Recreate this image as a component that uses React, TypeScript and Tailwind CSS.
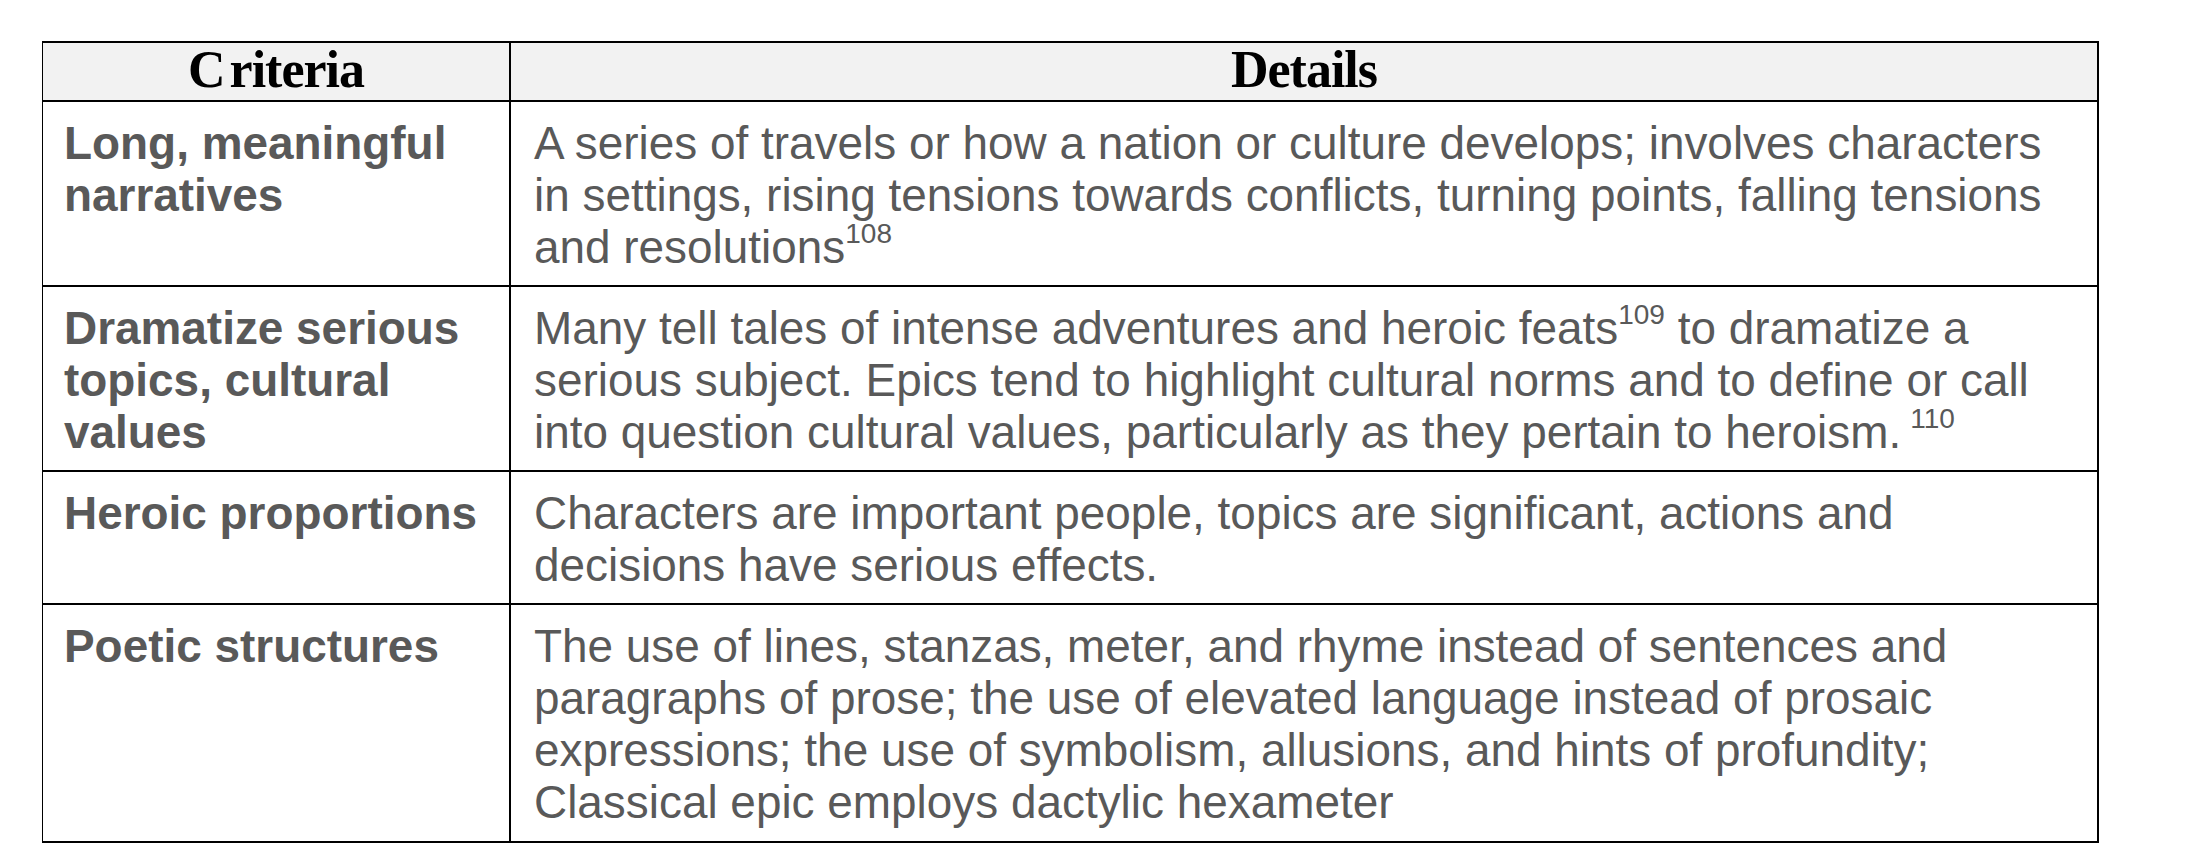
import React from "react";

const sans = { fontFamily: '"Liberation Sans", Arial, Helvetica, sans-serif' };
const serif = { fontFamily: '"Liberation Serif", "Times New Roman", serif' };

function Sup({ children, className = "" }: { children: React.ReactNode; className?: string }) {
  return <sup className={`text-[28px] relative top-[-0.72em] leading-none ${className}`}>{children}</sup>;
}

type Row = { label: string[]; lines: React.ReactNode[] };

const rows: Row[] = [
  {
    label: ["Long, meaningful", "narratives"],
    lines: [
      "A series of travels or how a nation or culture develops; involves characters",
      "in settings, rising tensions towards conflicts, turning points, falling tensions",
      <>and resolutions<Sup>108</Sup></>,
    ],
  },
  {
    label: ["Dramatize serious", "topics, cultural", "values"],
    lines: [
      <>Many tell tales of intense adventures and heroic feats<Sup>109</Sup> to dramatize a</>,
      "serious subject. Epics tend to highlight cultural norms and to define or call",
      <>into question cultural values, particularly as they pertain to heroism.<Sup className="ml-[9px]">110</Sup></>,
    ],
  },
  {
    label: ["Heroic proportions"],
    lines: [
      "Characters are important people, topics are significant, actions and",
      "decisions have serious effects.",
    ],
  },
  {
    label: ["Poetic structures"],
    lines: [
      "The use of lines, stanzas, meter, and rhyme instead of sentences and",
      "paragraphs of prose; the use of elevated language instead of prosaic",
      "expressions; the use of symbolism, allusions, and hints of profundity;",
      "Classical epic employs dactylic hexameter",
    ],
  },
];

export default function App() {
  return (
    <div className="w-[2185px] h-[852px] bg-white overflow-hidden pt-[41px] pl-[42px]" style={sans}>
      <div className="w-[2057px] border-t-2 border-r-2 border-b-2 border-l border-black">
        <div className="flex bg-[#f2f2f2] border-b-2 border-black h-[59px]">
          <div className="w-[466px] h-[57px] pt-[1px] text-center text-black font-bold text-[52px] leading-[52px] tracking-[-1px]" style={serif}>
            <span className="mr-[5px]">C</span>riteria
          </div>
          <div className="flex-1 h-[57px] pt-[1px] border-l-2 border-black text-center text-black font-bold text-[52px] leading-[52px] tracking-[-1px]" style={serif}>
            Details
          </div>
        </div>
        {rows.map((r, i) => (
          <div key={i} className={`flex ${i < rows.length - 1 ? "border-b-2 border-black" : ""}`}>
            <div className={`w-[466px] pl-[21px] pr-[12px] pt-[15px] ${i < rows.length - 1 ? "pb-[12px]" : "pb-[13px]"} font-bold text-[45.9px] leading-[52px] text-[#595959]`}>
              {r.label.map((l, j) => (
                <div key={j} className="whitespace-nowrap">{l}</div>
              ))}
            </div>
            <div className={`flex-1 border-l-2 border-black pl-[23px] pr-[12px] pt-[15px] ${i < rows.length - 1 ? "pb-[12px]" : "pb-[13px]"} text-[45.9px] leading-[52px] text-[#595959]`}>
              {r.lines.map((l, j) => (
                <div key={j} className="whitespace-nowrap">{l}</div>
              ))}
            </div>
          </div>
        ))}
      </div>
    </div>
  );
}
